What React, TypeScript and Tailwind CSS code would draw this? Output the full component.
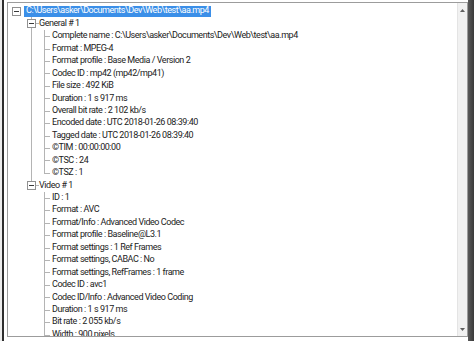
type Item = { text: string };

const general: string[] = [
  "Complete name : C:\\Users\\asker\\Documents\\Dev\\Web\\test\\aa.mp4",
  "Format : MPEG-4",
  "Format profile : Base Media / Version 2",
  "Codec ID : mp42 (mp42/mp41)",
  "File size : 492 KiB",
  "Duration : 1 s 917 ms",
  "Overall bit rate : 2 102 kb/s",
  "Encoded date : UTC 2018-01-26 08:39:40",
  "Tagged date : UTC 2018-01-26 08:39:40",
  "©TIM : 00:00:00:00",
  "©TSC : 24",
  "©TSZ : 1",
];

const video: string[] = [
  "ID : 1",
  "Format : AVC",
  "Format/Info : Advanced Video Codec",
  "Format profile : Baseline@L3.1",
  "Format settings : 1 Ref Frames",
  "Format settings, CABAC : No",
  "Format settings, RefFrames : 1 frame",
  "Codec ID : avc1",
  "Codec ID/Info : Advanced Video Coding",
  "Duration : 1 s 917 ms",
  "Bit rate : 2 055 kb/s",
  "Width : 900 pixels",
];

function Expander({ up, down }: { up: boolean; down: boolean }) {
  return (
    <div className="flex h-full w-[9px] flex-col">
      <div className={`w-[5px] flex-1 ${up ? "border-r border-[#b4b4b4]" : ""}`} />
      <div className="flex h-[9px] w-[9px] items-center justify-center border border-[#919191] bg-white">
        <div className="h-px w-[5px] bg-[#3a3a3a]" />
      </div>
      <div className={`w-[5px] flex-1 ${down ? "border-r border-[#b4b4b4]" : ""}`} />
    </div>
  );
}

function Row({ children }: { children: React.ReactNode }) {
  return <div className="flex h-[12.45px] items-center whitespace-nowrap">{children}</div>;
}

function Leaf({ text, parentLine, last }: Item & { parentLine: boolean; last: boolean }) {
  return (
    <Row>
      <div className="h-full w-[19px]" />
      <div className="h-full w-[9px]">
        <div className={`h-full w-[5px] ${parentLine ? "border-r border-[#b4b4b4]" : ""}`} />
      </div>
      <div className="h-full w-[8px]" />
      <div className="flex h-full w-[6px] flex-col">
        <div className="h-1/2 border-l border-[#b4b4b4]" />
        <div className={`h-1/2 border-t border-[#b4b4b4] ${last ? "" : "border-l"}`} />
      </div>
      <span className="ml-[2px]">{text}</span>
    </Row>
  );
}

function Group({ title, items, hasNext }: { title: string; items: string[]; hasNext: boolean }) {
  return (
    <>
      <Row>
        <div className="h-full w-[19px]" />
        <Expander up down={hasNext} />
        <div className="h-px w-[3px] bg-[#b4b4b4]" />
        <span>{title}</span>
      </Row>
      {items.map((t, i) => (
        <Leaf key={i} text={t} parentLine={hasNext} last={i === items.length - 1} />
      ))}
    </>
  );
}

export default function App() {
  return (
    <div
      className="flex h-[341px] w-[474px] overflow-hidden bg-[#ececec] text-[9px] tracking-[-0.45px] text-[#222]"
      style={{ fontFamily: 'Roboto, "Liberation Sans", sans-serif' }}
    >
      <div className="ml-[2px] w-[2px] bg-[#2e2e2e]" />
      <div className="flex flex-1 flex-col bg-white pl-[3px] pt-[2px]">
        <div className="flex h-[335px] border border-[#9c9c9c]">
          <div className="flex-1 overflow-hidden pt-[2px]">
            <Row>
              <div className="h-full w-[4px]" />
              <Expander up={false} down={false} />
              <div className="w-[3px]" />
              <span className="flex h-[11px] items-center bg-[#3b8fe8] px-[2px] text-white">
                C:\Users\asker\Documents\Dev\Web\test\aa.mp4
              </span>
            </Row>
            <Group title="General # 1" items={general} hasNext />
            <Row>
              <div className="h-full w-[19px]" />
              <Expander up down={false} />
              <div className="h-px w-[3px] bg-[#b4b4b4]" />
              <span>Video # 1</span>
            </Row>
            {video.map((t, i) => (
              <Leaf key={i} text={t} parentLine={false} last={false} />
            ))}
          </div>
          <div className="flex w-[10px] flex-col border-l border-[#e4e4e4] bg-[#f1f1f1]">
            <div className="flex h-[14px] items-center justify-center">
              <svg width="5" height="3" viewBox="0 0 5 3">
                <path d="M0 3 L2.5 0 L5 3 Z" fill="#606060" />
              </svg>
            </div>
            <div className="flex-1" />
            <div className="flex h-[14px] items-center justify-center">
              <svg width="5" height="3" viewBox="0 0 5 3">
                <path d="M0 0 L2.5 3 L5 0 Z" fill="#606060" />
              </svg>
            </div>
          </div>
        </div>
      </div>
      <div className="w-[6px] bg-gradient-to-r from-[#5a5a5a] to-[#3a3a3a]" />
    </div>
  );
}
